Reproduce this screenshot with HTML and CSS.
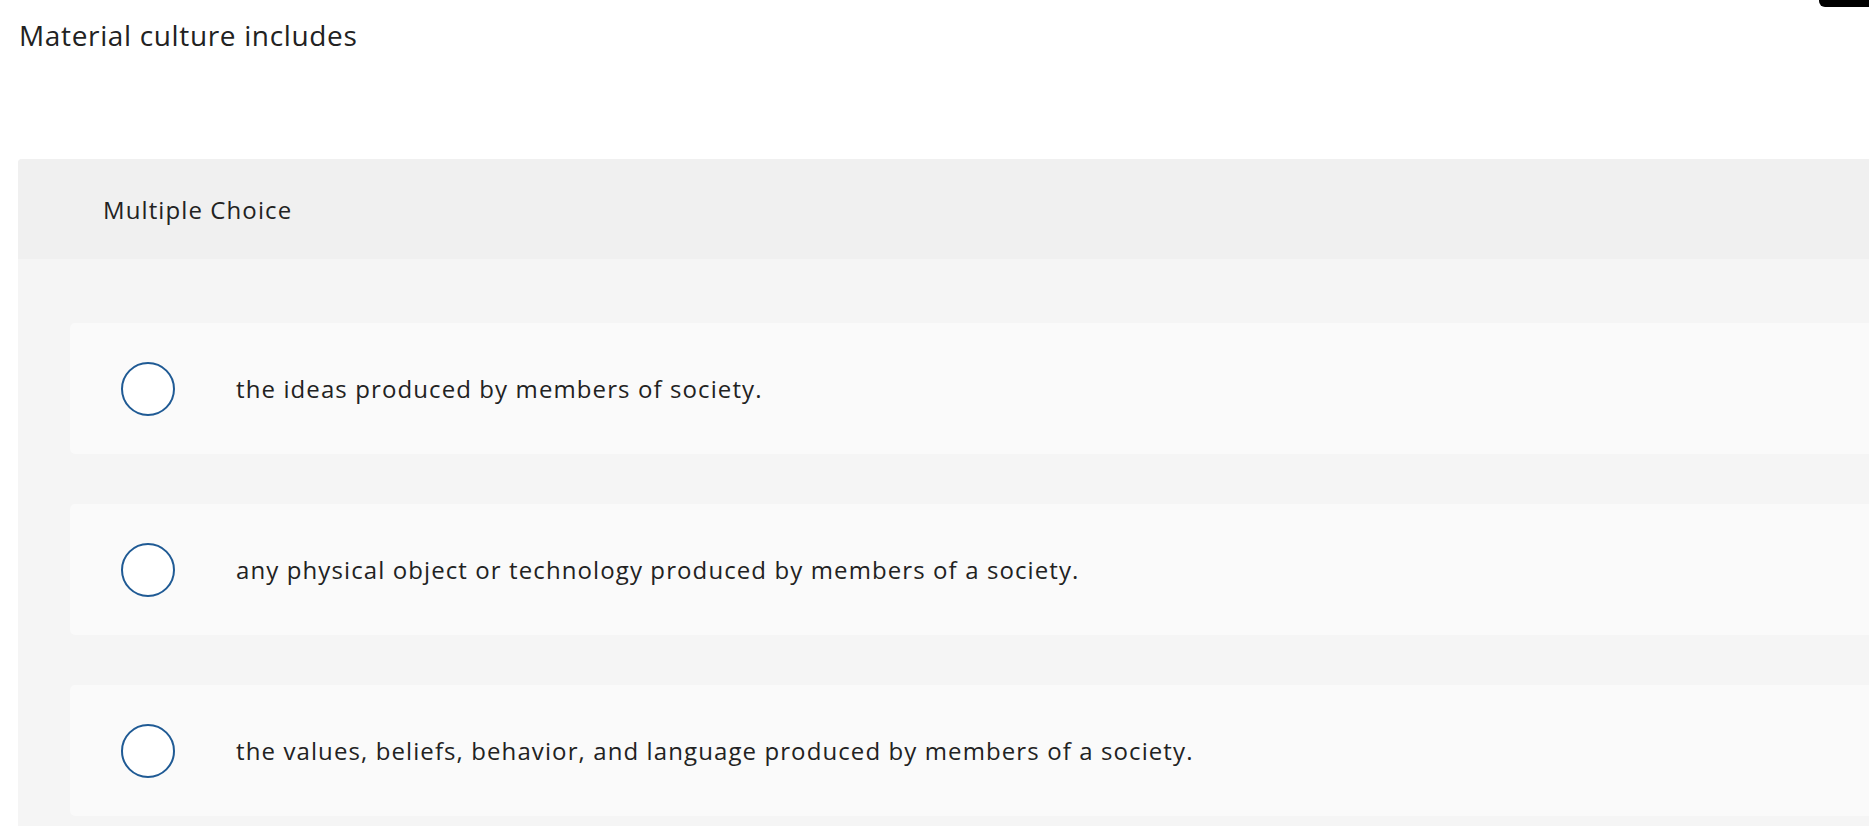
FILE: index.html
```html
<!DOCTYPE html>
<html lang="en">
<head>
<meta charset="utf-8">
<title>Material culture includes</title>
<link rel="stylesheet" href="styles.css">
</head>
<body>
<div class="corner-tab"></div>
<main class="page">
  <h1 class="question">Material culture includes</h1>
  <section class="card">
    <header class="card-header">Multiple Choice</header>
    <div class="card-body">
      <label class="option">
        <span class="radio"></span>
        <span class="option-text">the ideas produced by members of society.</span>
      </label>
      <label class="option">
        <span class="radio"></span>
        <span class="option-text">any physical object or technology produced by members of a society.</span>
      </label>
      <label class="option">
        <span class="radio"></span>
        <span class="option-text">the values, beliefs, behavior, and language produced by members of a society.</span>
      </label>
    </div>
  </section>
</main>
</body>
</html>
```

FILE: styles.css
```css
html, body {
  margin: 0;
  padding: 0;
  background: #ffffff;
  overflow: hidden;
}
body {
  font-family: "Open Sans", Lato, Arial, sans-serif;
  color: #222222;
}
.corner-tab {
  position: absolute;
  top: 0;
  right: 0;
  width: 50px;
  height: 7px;
  background: #000;
  border-bottom-left-radius: 6px;
}
.page {
  padding: 0 0 0 18px;
}
.question {
  margin: 0;
  padding: 17px 0 0 1px;
  height: 159px;
  box-sizing: border-box;
  font-weight: 400;
  font-size: 28px;
  line-height: 36px;
  letter-spacing: 0.65px;
  color: #222;
}
.card {
  width: 1900px;
  border-radius: 4px;
  overflow: hidden;
  background: #f5f5f5;
}
.card-header {
  height: 100px;
  background: #f0f0f0;
  display: flex;
  align-items: center;
  padding-left: 85px;
  font-size: 24px;
  letter-spacing: 1.1px;
  color: #222;
}
.card-body {
  padding: 64px 0 20px 52px;
  display: flex;
  flex-direction: column;
  gap: 50px;
}
.option {
  height: 131px;
  background: #fafafa;
  border-radius: 5px;
  display: flex;
  align-items: center;
  padding-left: 51px;
}
.radio {
  width: 54px;
  height: 54px;
  box-sizing: border-box;
  border: 2px solid #1f5a94;
  border-radius: 50%;
  background: #fff;
  flex: none;
}
.option-text {
  margin-left: 61px;
  font-size: 24px;
  letter-spacing: 1.1px;
  color: #222;
}
```
